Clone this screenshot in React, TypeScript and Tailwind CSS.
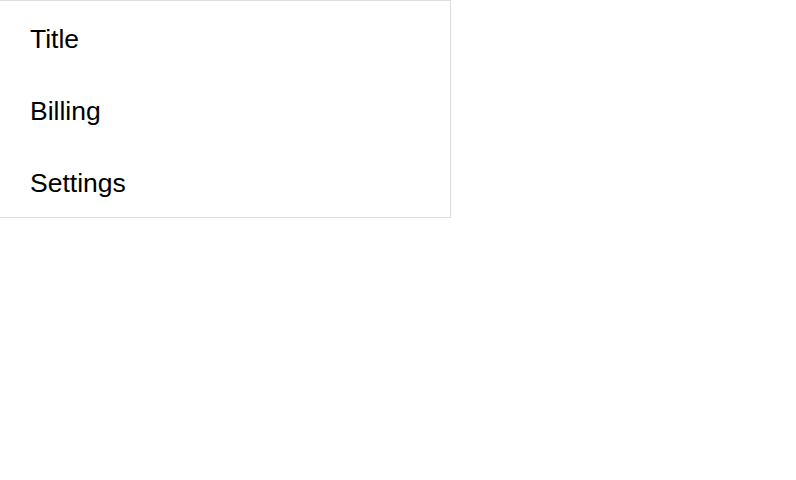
export default function App() {
  const items = ["Title", "Billing", "Settings"];
  return (
    <div className="w-[796px] h-[480px] bg-white" style={{ fontFamily: '"Liberation Sans", Arial, sans-serif' }}>
      <ul className="w-[451px] border-t border-r border-b border-[#dddddd]">
        {items.map((item) => (
          <li key={item} className="h-[72px] flex items-center pl-[30px] pt-[6px] text-[26.5px] text-black">
            {item}
          </li>
        ))}
      </ul>
    </div>
  );
}
